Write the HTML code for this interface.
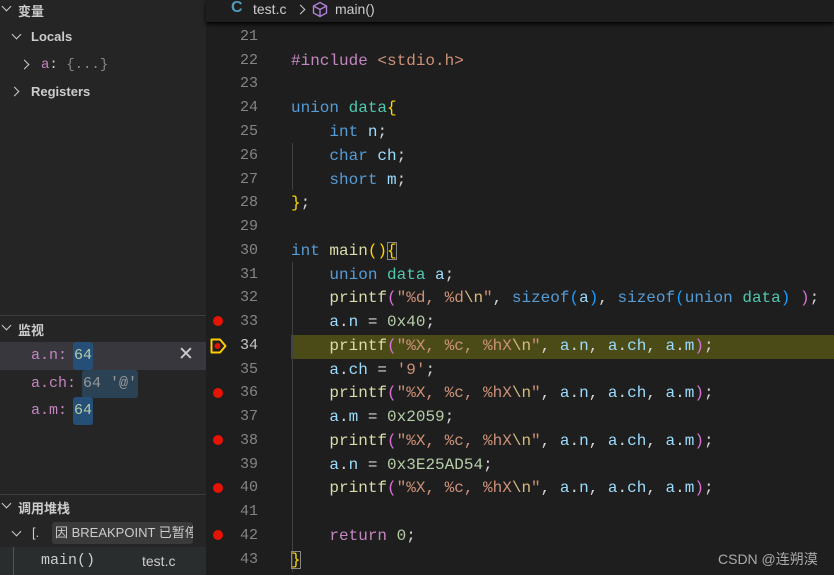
<!DOCTYPE html>
<html><head><meta charset="utf-8"><style>
*{margin:0;padding:0;box-sizing:border-box}
body{width:834px;height:575px;overflow:hidden;background:#1e1e1e;font-family:"Liberation Sans","Noto Sans CJK SC",sans-serif;position:relative}
.side{position:absolute;left:0;top:0;width:206px;height:575px;background:#252526;color:#ccc;font-size:13px}
.ab{position:absolute;white-space:nowrap}
.hdr{font-weight:bold;font-size:13px;color:#ccc}
.mono{font-family:"Liberation Mono","Noto Sans CJK SC",monospace}
.chev{position:absolute;width:7px;height:7px;border-right:1.3px solid #ccc;border-bottom:1.3px solid #ccc}
.down{transform:rotate(45deg)}
.right{transform:rotate(-45deg)}
.ed{position:absolute;left:206px;top:0;width:628px;height:575px;background:#1e1e1e}
.ln{position:absolute;left:206px;width:52px;text-align:right;font-family:"Liberation Mono",monospace;font-size:15px;color:#858585;height:24px;line-height:24px;margin-top:1px}
.cl{position:absolute;left:291px;font-family:"Liberation Mono",monospace;font-size:16px;height:24px;line-height:24px;white-space:pre;color:#d4d4d4;margin-top:1px}
.bp{position:absolute;left:213px;width:10px;height:10px;border-radius:50%;background:#e51400}
.k{color:#569cd6}.t{color:#4ec9b0}.f{color:#dcdcaa}.s{color:#ce9178}.e{color:#d7ba7d}.v{color:#9cdcfe}.n{color:#b5cea8}.p{color:#c586c0}.y{color:#ffd700}.pk{color:#da70d6}.b{color:#179fff}
.w{font-size:15px;line-height:20px}
.pill{position:absolute;top:0;border-radius:3px;padding:0 1px;height:28px;line-height:28px}
</style></head><body>
<div class="side">
 <div class="chev down" style="left:3px;top:3px"></div>
 <div class="ab hdr" style="left:18px;top:1px">变量</div>
 <div class="chev down" style="left:13px;top:31px"></div>
 <div class="ab hdr" style="left:31px;top:29px">Locals</div>
 <div class="chev right" style="left:21px;top:61px"></div>
 <div class="ab mono" style="left:41px;top:57px;font-size:14px"><span style="color:#c586c0">a</span><span style="color:#ccc">:</span> <span style="color:#888">{...}</span></div>
 <div class="chev right" style="left:11px;top:88px"></div>
 <div class="ab hdr" style="left:31px;top:84px">Registers</div>

 <div class="ab" style="left:0;top:315px;width:206px;height:1px;background:#3c3c3c"></div>
 <div class="chev down" style="left:3px;top:322px"></div>
 <div class="ab hdr" style="left:18px;top:320px">监视</div>
 <div class="ab" style="left:0;top:342px;width:206px;height:28px;background:#37373d"></div>
 <div class="ab mono w" style="left:31px;top:346px;color:#c586c0">a.n:</div>
 <div class="ab mono w pill" style="left:73px;top:342px;background:#264f78;color:#b5cea8">64</div>
 <div class="ab" style="left:178px;top:343px;color:#ccc;font-size:19px">✕</div>
 <div class="ab mono w" style="left:31px;top:374px;color:#c586c0">a.ch:</div>
 <div class="ab mono w pill" style="left:82px;top:370px;background:#2b4154;color:#999">64 '@'</div>
 <div class="ab mono w" style="left:31px;top:401px;color:#c586c0">a.m:</div>
 <div class="ab mono w pill" style="left:73px;top:397px;background:#264f78;color:#b5cea8">64</div>

 <div class="ab" style="left:0;top:494px;width:206px;height:1px;background:#3c3c3c"></div>
 <div class="chev down" style="left:3px;top:500px"></div>
 <div class="ab hdr" style="left:18px;top:498px">调用堆栈</div>
 <div class="chev down" style="left:13px;top:528px"></div>
 <div class="ab" style="left:32px;top:525px;color:#ccc">[.</div>
 <div class="ab" style="left:52px;top:522px;width:141px;height:22px;background:#3a3a3a;border-radius:3px;color:#ccc;font-size:13px;line-height:22px;padding-left:3px;overflow:hidden">因 BREAKPOINT 已暂停</div>
 <div class="ab" style="left:0;top:547px;width:206px;height:28px;background:#2a2d2e"></div>
 <div class="ab" style="left:13px;top:547px;width:1px;height:28px;background:#555"></div>
 <div class="ab mono" style="left:41px;top:552px;font-size:15px;color:#ccc">main()</div>
 <div class="ab" style="left:142px;top:553px;font-size:14px;color:#ccc">test.c</div>
</div>
<div class="ed"></div>
<div class="ab" style="left:206px;top:0;width:628px;height:22px;background:#1e1e1e;box-shadow:0 2px 4px #000"></div>
<div class="ab" style="left:231px;top:-1px;color:#519aba;font-weight:bold;font-size:16px">C</div>
<div class="ab" style="left:253px;top:1px;color:#ccc;font-size:14px">test.c</div>
<div class="chev right" style="left:297px;top:6px;border-color:#ccc"></div>
<svg class="ab" style="left:312px;top:1px" width="16" height="17" viewBox="0 0 16 17"><path d="M8 1.5 L14.5 5 V12 L8 15.5 L1.5 12 V5 Z M1.5 5 L8 8.5 L14.5 5 M8 8.5 V15.5" fill="none" stroke="#b180d7" stroke-width="1.4"/></svg>
<div class="ab" style="left:335px;top:1px;color:#ccc;font-size:14px">main()</div>

<div class="ab" style="left:291px;top:335px;width:543px;height:24px;background:#4b4b18"></div>
<div class="ab" style="left:292px;top:143px;width:1px;height:47px;background:#404040"></div>
<div class="ab" style="left:292px;top:262px;width:1px;height:310px;background:#404040"></div>

<div class="ln" style="top:24px">21</div><div class="ln" style="top:48px">22</div><div class="ln" style="top:71px">23</div><div class="ln" style="top:95px">24</div><div class="ln" style="top:119px">25</div><div class="ln" style="top:143px">26</div><div class="ln" style="top:167px">27</div><div class="ln" style="top:190px">28</div><div class="ln" style="top:214px">29</div><div class="ln" style="top:238px">30</div><div class="ln" style="top:262px">31</div><div class="ln" style="top:285px">32</div><div class="ln" style="top:309px">33</div><div class="ln" style="top:333px;color:#c6c6c6">34</div><div class="ln" style="top:357px">35</div><div class="ln" style="top:380px">36</div><div class="ln" style="top:404px">37</div><div class="ln" style="top:428px">38</div><div class="ln" style="top:452px">39</div><div class="ln" style="top:475px">40</div><div class="ln" style="top:499px">41</div><div class="ln" style="top:523px">42</div><div class="ln" style="top:547px">43</div>

<div class="bp" style="top:316px"></div>
<svg class="ab" style="left:210px;top:338px" width="18" height="16"><path d="M1.5 1.5 H10 L15.5 8 L10 14.5 H1.5 Z" fill="none" stroke="#ffcc00" stroke-width="2" stroke-linejoin="round"/><circle cx="7.5" cy="8" r="3" fill="#e51400"/></svg>
<div class="bp" style="top:388px"></div><div class="bp" style="top:435px"></div><div class="bp" style="top:483px"></div><div class="bp" style="top:530px"></div>

<div class="cl" style="top:48px"><span class="p">#include</span> <span class="s">&lt;stdio.h&gt;</span></div>
<div class="cl" style="top:95px"><span class="k">union</span> <span class="t">data</span><span class="y">{</span></div>
<div class="cl" style="top:119px">    <span class="k">int</span> <span class="v">n</span>;</div>
<div class="cl" style="top:143px">    <span class="k">char</span> <span class="v">ch</span>;</div>
<div class="cl" style="top:167px">    <span class="k">short</span> <span class="v">m</span>;</div>
<div class="cl" style="top:190px"><span class="y">}</span>;</div>
<div class="cl" style="top:238px"><span class="k">int</span> <span class="f">main</span><span class="y">()<span style="outline:1px solid #888;outline-offset:-1px">{</span></span></div>
<div class="cl" style="top:262px">    <span class="k">union</span> <span class="t">data</span> <span class="v">a</span>;</div>
<div class="cl" style="top:285px">    <span class="f">printf</span><span class="pk">(</span><span class="s">"%d, %d</span><span class="e">\n</span><span class="s">"</span>, <span class="k">sizeof</span><span class="b">(</span><span class="v">a</span><span class="b">)</span>, <span class="k">sizeof</span><span class="b">(</span><span class="k">union</span> <span class="t">data</span><span class="b">)</span> <span class="pk">)</span>;</div>
<div class="cl" style="top:309px">    <span class="v">a</span>.<span class="v">n</span> = <span class="n">0x40</span>;</div>
<div class="cl" style="top:333px">    <span class="f">printf</span><span class="pk">(</span><span class="s">"%X, %c, %hX</span><span class="e">\n</span><span class="s">"</span>, <span class="v">a</span>.<span class="v">n</span>, <span class="v">a</span>.<span class="v">ch</span>, <span class="v">a</span>.<span class="v">m</span><span class="pk">)</span>;</div>
<div class="cl" style="top:357px">    <span class="v">a</span>.<span class="v">ch</span> = <span class="s">'9'</span>;</div>
<div class="cl" style="top:380px">    <span class="f">printf</span><span class="pk">(</span><span class="s">"%X, %c, %hX</span><span class="e">\n</span><span class="s">"</span>, <span class="v">a</span>.<span class="v">n</span>, <span class="v">a</span>.<span class="v">ch</span>, <span class="v">a</span>.<span class="v">m</span><span class="pk">)</span>;</div>
<div class="cl" style="top:404px">    <span class="v">a</span>.<span class="v">m</span> = <span class="n">0x2059</span>;</div>
<div class="cl" style="top:428px">    <span class="f">printf</span><span class="pk">(</span><span class="s">"%X, %c, %hX</span><span class="e">\n</span><span class="s">"</span>, <span class="v">a</span>.<span class="v">n</span>, <span class="v">a</span>.<span class="v">ch</span>, <span class="v">a</span>.<span class="v">m</span><span class="pk">)</span>;</div>
<div class="cl" style="top:452px">    <span class="v">a</span>.<span class="v">n</span> = <span class="n">0x3E25AD54</span>;</div>
<div class="cl" style="top:475px">    <span class="f">printf</span><span class="pk">(</span><span class="s">"%X, %c, %hX</span><span class="e">\n</span><span class="s">"</span>, <span class="v">a</span>.<span class="v">n</span>, <span class="v">a</span>.<span class="v">ch</span>, <span class="v">a</span>.<span class="v">m</span><span class="pk">)</span>;</div>
<div class="cl" style="top:523px">    <span class="p">return</span> <span class="n">0</span>;</div>
<div class="cl" style="top:547px"><span class="y" style="outline:1px solid #888;outline-offset:-1px">}</span></div>

<div class="ab" style="left:718px;top:549px;color:#aaa;font-size:14px">CSDN @连朔漠</div>
</body></html>
